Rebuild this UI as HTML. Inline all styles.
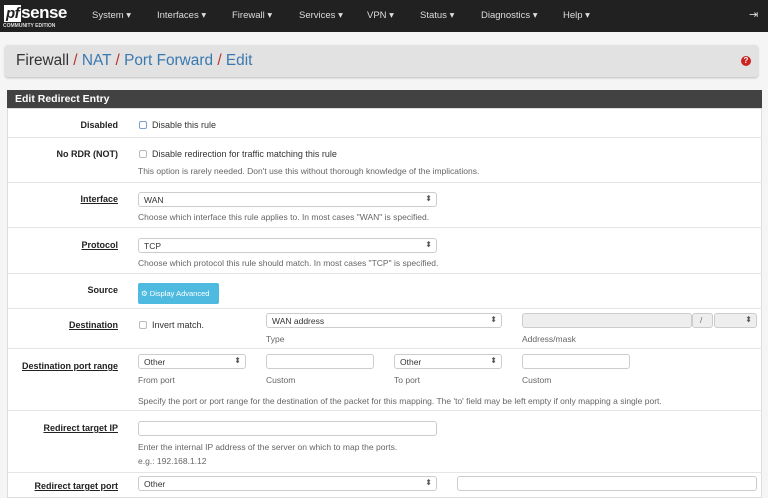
<!DOCTYPE html>
<html><head><style>
*{box-sizing:border-box;margin:0;padding:0}
body{width:768px;height:486px;overflow:hidden;background:#f5f5f5;font-family:"Liberation Sans",sans-serif;font-size:9px;color:#333;position:relative}
.a{position:absolute}
.nav{left:0;top:0;width:768px;height:32px;background:#212121}
.nav span{position:absolute;top:10px;color:#ddd;font-size:9.5px}
.crumb{left:5px;top:45px;width:753px;height:32px;background:#e2e2e2;border-radius:3px;box-shadow:0 1px 2px #bbb;font-size:15.4px;padding:7px 11px;color:#333}
.crumb b{font-weight:normal;color:#3a78b0}.crumb i{font-style:normal;color:#b33}
.ph{left:7px;top:90px;width:755px;height:18px;background:#424242;color:#fff;font-weight:bold;font-size:10.5px;padding:3px 8px}
.pb{left:7px;top:108px;width:755px;height:390px;background:#fff;border:1px solid #ddd}
.ln{position:absolute;left:8px;width:754px;height:1px;background:#e5e5e5}
.lb{position:absolute;width:112px;left:6px;text-align:right;font-weight:bold;font-size:9px;color:#222}
.lb u{text-decoration:underline}
.t{position:absolute;font-size:9px;color:#333}
.h{position:absolute;font-size:8.5px;color:#666}
.sel{position:absolute;height:15px;border:1px solid #ccc;border-radius:3px;background:#fff;padding:2px 5px;font-size:8.5px;color:#333}
.sel:after{content:"⬍";position:absolute;right:4px;top:1px;font-size:8px;color:#555}
.inp{position:absolute;height:15px;border:1px solid #ccc;border-radius:3px;background:#fff}
.cb{position:absolute;width:8px;height:8px;border:1px solid #bbb;border-radius:2px;background:#fff}
</style></head><body>
<div class="a nav">
<div class="a" style="left:4px;top:3px;color:#fff;font-weight:bold;font-size:17px;letter-spacing:-0.5px"><span style="position:static;background:#fff;color:#212121;font-style:italic;padding:0 2px;font-size:15px">pf</span>sense</div>
<div class="a" style="left:3px;top:23px;color:#ddd;font-size:5px;font-weight:bold">COMMUNITY EDITION</div>
<span style="left:92px">System ▾</span><span style="left:157px">Interfaces ▾</span><span style="left:232px">Firewall ▾</span><span style="left:299px">Services ▾</span><span style="left:367px">VPN ▾</span><span style="left:420px">Status ▾</span><span style="left:481px">Diagnostics ▾</span><span style="left:563px">Help ▾</span>
<span style="left:749px;top:8px;color:#ddd;font-size:11px">⇥</span>
</div>
<div class="a crumb">Firewall <i>/</i> <b>NAT</b> <i>/</i> <b>Port Forward</b> <i>/</i> <b>Edit</b></div>
<div class="a" style="left:741px;top:56px;width:10px;height:10px;border-radius:50%;background:#c22;color:#fff;font-size:8px;font-weight:bold;text-align:center;line-height:10px">?</div>
<div class="a ph">Edit Redirect Entry</div>
<div class="a pb"></div>
<div class="ln" style="top:137px"></div><div class="ln" style="top:182px"></div><div class="ln" style="top:227px"></div><div class="ln" style="top:273px"></div><div class="ln" style="top:308px"></div><div class="ln" style="top:348px"></div><div class="ln" style="top:410px"></div><div class="ln" style="top:472px"></div>

<div class="lb" style="top:120px">Disabled</div>
<div class="cb" style="left:139px;top:121px;border-color:#7aa0d0"></div><div class="t" style="left:152px;top:120px">Disable this rule</div>

<div class="lb" style="top:149px">No RDR (NOT)</div>
<div class="cb" style="left:139px;top:150px"></div><div class="t" style="left:152px;top:149px">Disable redirection for traffic matching this rule</div>
<div class="h" style="left:138px;top:166px">This option is rarely needed. Don't use this without thorough knowledge of the implications.</div>

<div class="lb" style="top:194px"><u>Interface</u></div>
<div class="sel" style="left:138px;top:192px;width:299px">WAN</div>
<div class="h" style="left:138px;top:212px">Choose which interface this rule applies to. In most cases "WAN" is specified.</div>

<div class="lb" style="top:240px"><u>Protocol</u></div>
<div class="sel" style="left:138px;top:238px;width:299px">TCP</div>
<div class="h" style="left:138px;top:258px">Choose which protocol this rule should match. In most cases "TCP" is specified.</div>

<div class="lb" style="top:285px">Source</div>
<div class="a" style="left:138px;top:283px;width:81px;height:21px;background:#4fbadf;border-radius:2px;color:#fff;font-size:7.5px;padding:6px 3px">⚙ Display Advanced</div>

<div class="lb" style="top:320px"><u>Destination</u></div>
<div class="cb" style="left:139px;top:321px"></div><div class="t" style="left:152px;top:320px">Invert match.</div>
<div class="sel" style="left:266px;top:313px;width:236px">WAN address</div>
<div class="h" style="left:266px;top:334px">Type</div>
<div class="inp" style="left:522px;top:313px;width:170px;background:#eee"></div>
<div class="inp" style="left:692px;top:313px;width:21px;background:#eee;font-size:8px;color:#666;padding:2px 7px">/</div>
<div class="sel" style="left:714px;top:313px;width:43px;background:#eee"></div>
<div class="h" style="left:522px;top:334px">Address/mask</div>

<div class="lb" style="top:361px"><u>Destination port range</u></div>
<div class="sel" style="left:138px;top:354px;width:108px">Other</div>
<div class="h" style="left:138px;top:375px">From port</div>
<div class="inp" style="left:266px;top:354px;width:108px"></div>
<div class="h" style="left:266px;top:375px">Custom</div>
<div class="sel" style="left:394px;top:354px;width:108px">Other</div>
<div class="h" style="left:394px;top:375px">To port</div>
<div class="inp" style="left:522px;top:354px;width:108px"></div>
<div class="h" style="left:522px;top:375px">Custom</div>
<div class="h" style="left:138px;top:396px">Specify the port or port range for the destination of the packet for this mapping. The 'to' field may be left empty if only mapping a single port.</div>

<div class="lb" style="top:423px"><u>Redirect target IP</u></div>
<div class="inp" style="left:138px;top:421px;width:299px"></div>
<div class="h" style="left:138px;top:442px">Enter the internal IP address of the server on which to map the ports.</div>
<div class="h" style="left:138px;top:456px">e.g.: 192.168.1.12</div>

<div class="lb" style="top:481px"><u>Redirect target port</u></div>
<div class="sel" style="left:138px;top:476px;width:299px">Other</div>
<div class="inp" style="left:457px;top:476px;width:300px"></div>
</body></html>
